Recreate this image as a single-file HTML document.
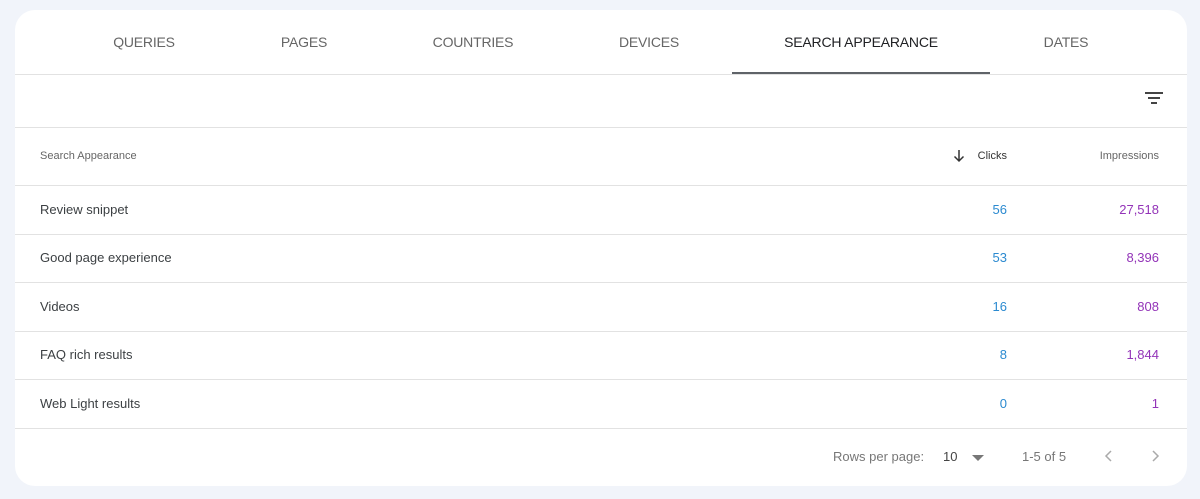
<!DOCTYPE html><html><head><style>
body{margin:0;width:1200px;height:499px;background:#f1f4fa;font-family:"Liberation Sans",sans-serif;position:relative;overflow:hidden}
.card{position:absolute;left:15px;top:10px;width:1172px;height:476px;background:#fff;border-radius:20px;overflow:hidden}
.t{position:absolute;top:24px;font-size:14px;color:#666;transform:translateX(-50%);white-space:nowrap;letter-spacing:-0.2px}
.line{position:absolute;left:0;right:0;height:1px;background:#e2e2e2}
.c{position:absolute;font-size:13px;color:#3c4043;white-space:nowrap}
.r{transform:translateX(-100%)}
.b{color:#2b8ad0}.p{color:#9334b8}
</style></head><body><div class="card">
<div class="t" style="left:129px">QUERIES</div>
<div class="t" style="left:289px">PAGES</div>
<div class="t" style="left:458px">COUNTRIES</div>
<div class="t" style="left:634px">DEVICES</div>
<div class="t" style="left:846px;color:#202124">SEARCH APPEARANCE</div>
<div class="t" style="left:1051px">DATES</div>
<div style="position:absolute;left:717px;top:62px;width:258px;height:3px;background:#5f6368"></div>
<div class="line" style="top:64px"></div>
<svg style="position:absolute;left:1129px;top:78px" width="20" height="20" viewBox="0 0 20 20"><path d="M1 5h18M4 10h12M7 15h6" stroke="#444" stroke-width="2"/></svg>
<div class="line" style="top:117px"></div>
<div class="c" style="left:25px;top:140px;font-size:11px;color:#666">Search Appearance</div>
<svg style="position:absolute;left:938px;top:139px" width="12" height="14" viewBox="0 0 12 14"><path d="M6 1v11M1.5 7.5L6 12l4.5-4.5" stroke="#333" stroke-width="1.5" fill="none"/></svg>
<div class="c r" style="left:992px;top:140px;font-size:11px;color:#333">Clicks</div>
<div class="c r" style="left:1144px;top:140px;font-size:11px;color:#666">Impressions</div>
<div class="line" style="top:175px"></div>
<div class="c" style="left:25px;top:192px">Review snippet</div><div class="c r b" style="left:992px;top:192px">56</div><div class="c r p" style="left:1144px;top:192px">27,518</div>
<div class="line" style="top:224px"></div>
<div class="c" style="left:25px;top:240px">Good page experience</div><div class="c r b" style="left:992px;top:240px">53</div><div class="c r p" style="left:1144px;top:240px">8,396</div>
<div class="line" style="top:272px"></div>
<div class="c" style="left:25px;top:289px">Videos</div><div class="c r b" style="left:992px;top:289px">16</div><div class="c r p" style="left:1144px;top:289px">808</div>
<div class="line" style="top:321px"></div>
<div class="c" style="left:25px;top:337px">FAQ rich results</div><div class="c r b" style="left:992px;top:337px">8</div><div class="c r p" style="left:1144px;top:337px">1,844</div>
<div class="line" style="top:369px"></div>
<div class="c" style="left:25px;top:386px">Web Light results</div><div class="c r b" style="left:992px;top:386px">0</div><div class="c r p" style="left:1144px;top:386px">1</div>
<div class="line" style="top:418px"></div>
<div class="c" style="left:818px;top:439px;color:#777">Rows per page:</div>
<div class="c" style="left:928px;top:439px;color:#444">10</div>
<svg style="position:absolute;left:956px;top:444px" width="14" height="8"><path d="M1 1h12L7 7z" fill="#777"/></svg>
<div class="c" style="left:1007px;top:439px;color:#777">1-5 of 5</div>
<svg style="position:absolute;left:1089px;top:439px" width="10" height="14"><path d="M7 2L2 7l5 5" stroke="#aaa" stroke-width="1.5" fill="none"/></svg>
<svg style="position:absolute;left:1135px;top:439px" width="10" height="14"><path d="M3 2l5 5-5 5" stroke="#aaa" stroke-width="1.5" fill="none"/></svg>
</div></body></html>
